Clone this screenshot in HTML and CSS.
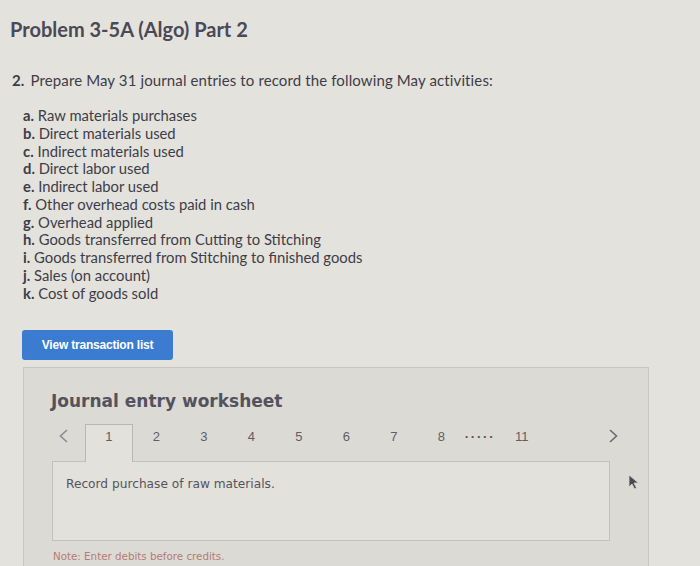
FILE: index.html
```html
<!DOCTYPE html>
<html lang="en">
<head>
<meta charset="utf-8">
<title>Problem 3-5A (Algo) Part 2</title>
<link rel="stylesheet" href="styles.css">
</head>
<body>
<div class="page">
  <h1 class="title">Problem 3-5A (Algo) Part 2</h1>
  <p class="intro"><b>2.</b> Prepare May 31 journal entries to record the following May activities:</p>
  <ul class="items">
    <li><b>a.</b> Raw materials purchases</li>
    <li><b>b.</b> Direct materials used</li>
    <li><b>c.</b> Indirect materials used</li>
    <li><b>d.</b> Direct labor used</li>
    <li><b>e.</b> Indirect labor used</li>
    <li><b>f.</b> Other overhead costs paid in cash</li>
    <li><b>g.</b> Overhead applied</li>
    <li><b>h.</b> Goods transferred from Cutting to Stitching</li>
    <li><b>i.</b> Goods transferred from Stitching to finished goods</li>
    <li><b>j.</b> Sales (on account)</li>
    <li><b>k.</b> Cost of goods sold</li>
  </ul>
  <button class="btn">View transaction list</button>
  <section class="worksheet">
    <h2 class="ws-title">Journal entry worksheet</h2>
    <div class="tabs">
      <span class="nav prev"><svg width="9" height="14" viewBox="0 0 9 14"><polyline points="8,1 1.5,7 8,13" fill="none" stroke="#8a8a90" stroke-width="1.6"/></svg></span>
      <span class="tab active">1</span>
      <span class="tab">2</span>
      <span class="tab">3</span>
      <span class="tab">4</span>
      <span class="tab">5</span>
      <span class="tab">6</span>
      <span class="tab">7</span>
      <span class="tab">8</span>
      <span class="dots">.....</span>
      <span class="tab">11</span>
      <span class="nav next"><svg width="9" height="14" viewBox="0 0 9 14"><polyline points="1,1 7.5,7 1,13" fill="none" stroke="#6a6a72" stroke-width="1.6"/></svg></span>
    </div>
    <div class="panel">Record purchase of raw materials.</div>
    <p class="note">Note: Enter debits before credits.</p>
    <svg class="cursor" width="12" height="16" viewBox="0 0 12 16"><path d="M1 1 L1 13 L4 10 L6.5 15 L8.5 14 L6 9 L10.5 9 Z" fill="#4a4a50" stroke="#d8d6d0" stroke-width="0.8"/></svg>
  </section>
</div>
</body>
</html>
```
FILE: styles.css
```css
html, body {
  margin: 0;
  padding: 0;
  background: #e4e2dd;
}
body {
  font-family: Lato, "Open Sans", sans-serif;
  color: #3d3d48;
  overflow: hidden;
}
.page {
  padding: 17px 0 0 10px;
}
.title {
  margin: 0;
  font-size: 20px;
  line-height: 24px;
  font-weight: 700;
  color: #4a4956;
}
.intro {
  margin: 30px 0 0 2px;
  font-size: 15px;
  line-height: 18px;
  letter-spacing: 0.12px;
}
.intro b {
  font-weight: 700;
  margin-right: 2px;
}
.items {
  list-style: none;
  margin: 18px 0 0 13px;
  padding: 0;
  font-size: 14.8px;
  line-height: 17.75px;
}
.items b {
  font-weight: 700;
}
.btn {
  display: block;
  margin: 28px 0 0 12px;
  width: 151px;
  height: 30px;
  border: none;
  border-radius: 3px;
  background: #3b7cd1;
  color: #fff;
  font-family: "Liberation Sans", Arial, sans-serif;
  font-weight: 700;
  font-size: 12px;
  letter-spacing: -0.2px;
  padding: 0;
}
.worksheet {
  position: relative;
  margin: 7px 0 0 13px;
  width: 626px;
  height: 220px;
  box-sizing: border-box;
  background: #dcdad4;
  border: 1px solid #c9c7c1;
  padding: 0 0 0 27px;
}
.ws-title {
  margin: 22px 0 0 0;
  font-family: "DejaVu Sans", Verdana, sans-serif;
  font-size: 17px;
  line-height: 22px;
  font-weight: 700;
  color: #53525e;
}
.tabs {
  display: flex;
  align-items: stretch;
  width: 575px;
  height: 37px;
  margin: 12px 0 0 1px;
  position: relative;
  z-index: 1;
  font-family: "Liberation Sans", Arial, sans-serif;
  font-size: 13px;
  line-height: 16px;
  color: #5f5e66;
}
.nav {
  display: flex;
  align-items: flex-start;
  padding-top: 5px;
  box-sizing: border-box;
}
.prev {
  width: 33px;
  padding-left: 7px;
}
.next {
  margin-left: auto;
  width: 28px;
  justify-content: center;
}
.tab {
  width: 47.5px;
  display: flex;
  align-items: flex-start;
  justify-content: center;
  box-sizing: border-box;
  padding-top: 5px;
}
.tab.active {
  background: #e3e1db;
  border: 1px solid #b9b7b1;
  border-bottom: none;
  height: 38px;
  padding-top: 4px;
}
.dots {
  width: 36px;
  display: flex;
  align-items: flex-start;
  justify-content: center;
  font-weight: 700;
  letter-spacing: 2.5px;
  margin-left: -3px;
  padding-top: 2px;
  box-sizing: border-box;
  color: #55545c;
}
.panel {
  margin: 0 0 0 1px;
  width: 558px;
  height: 80px;
  box-sizing: border-box;
  background: #e3e1db;
  border: 1px solid #c3c1bb;
  padding: 14px 0 0 13px;
  font-family: "DejaVu Sans", Verdana, sans-serif;
  font-size: 12.2px;
  line-height: 16px;
  color: #55545b;
}
.note {
  margin: 8px 0 0 2px;
  font-family: "DejaVu Sans", Verdana, sans-serif;
  font-size: 10.3px;
  line-height: 14px;
  color: #b57a78;
}
.cursor {
  position: absolute;
  left: 604px;
  top: 106px;
}
```
